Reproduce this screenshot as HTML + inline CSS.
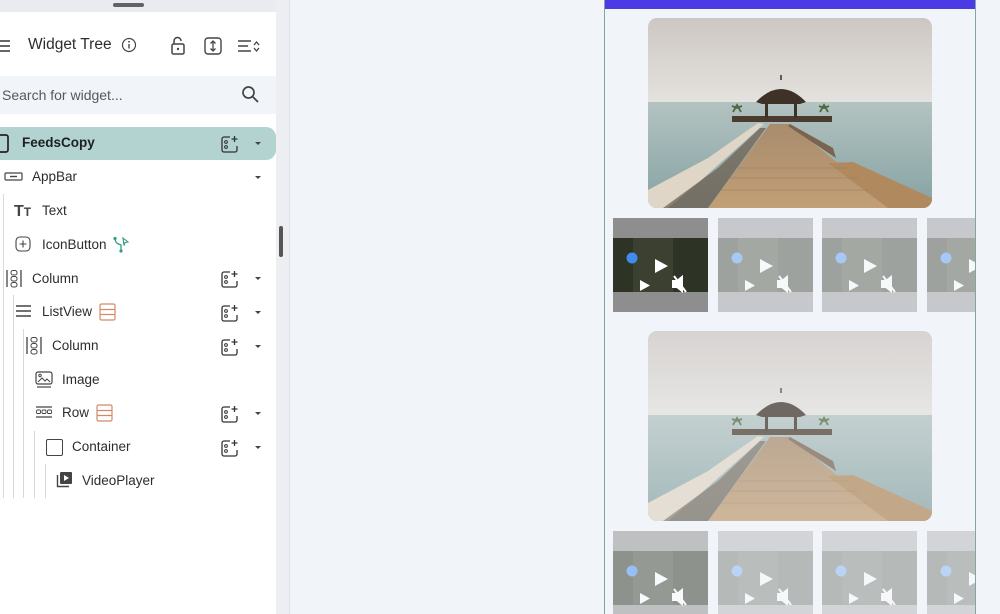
<!DOCTYPE html>
<html><head><meta charset="utf-8"><style>
*{margin:0;padding:0;box-sizing:border-box}
body{width:1000px;height:614px;overflow:hidden;background:#f1f4f8;font-family:"Liberation Sans",sans-serif;position:relative;color:#14181b}
.a{position:absolute}
.lbl{position:absolute;font-size:13.5px;color:#2a2d30}
.tl{position:absolute;width:1px;background:#d7dadd}
.add{position:absolute;width:18px;height:18px}
.car{position:absolute;width:0;height:0;border-left:3px solid transparent;border-right:3px solid transparent;border-top:3.5px solid #444}
</style></head><body>
<div class="a" style="left:0;top:0;width:276px;height:12px;background:#e9ebee"></div>
<div class="a" style="left:113px;top:3px;width:31px;height:4px;border-radius:2px;background:#5f6368"></div>
<div class="a" style="left:0;top:12px;width:276px;height:602px;background:#fff"></div>
<div class="a" style="left:276px;top:0;width:13px;height:614px;background:#eceef1"></div>
<div class="a" style="left:289px;top:0;width:1px;height:614px;background:#e0e3e7"></div>
<div class="a" style="left:279px;top:226px;width:4px;height:31px;border-radius:2px;background:#555"></div>

<svg class="a" style="left:0;top:38px" width="12" height="16"><path d="M0 3h10M0 8h10M0 13h10" stroke="#333" stroke-width="1.6"/></svg>
<div class="a" style="left:28px;top:36px;font-size:15.5px;color:#2a2d30">Widget Tree</div>
<svg class="a" style="left:121px;top:37px" width="16" height="16"><circle cx="8" cy="8" r="6.5" fill="none" stroke="#444" stroke-width="1.2"/><path d="M8 7v4.5" stroke="#444" stroke-width="1.4"/><circle cx="8" cy="4.8" r=".9" fill="#444"/></svg>
<svg class="a" style="left:169px;top:36px" width="18" height="20"><path d="M5 8V5a3.5 3.5 0 0 1 7 0" fill="none" stroke="#444" stroke-width="1.5"/><rect x="3" y="8" width="12" height="10" rx="1.5" fill="none" stroke="#444" stroke-width="1.5"/><circle cx="9" cy="13" r="1.2" fill="#444"/></svg>
<svg class="a" style="left:203px;top:36px" width="20" height="20"><rect x="2" y="2" width="16" height="16" rx="3" fill="none" stroke="#444" stroke-width="1.4"/><path d="M10 5v10M7.5 7.5 10 5l2.5 2.5M7.5 12.5 10 15l2.5-2.5" fill="none" stroke="#444" stroke-width="1.3"/></svg>
<svg class="a" style="left:237px;top:39px" width="24" height="16"><path d="M1 2h13M1 7h10M1 12h13" stroke="#444" stroke-width="1.6"/><path d="M17 6l2.5-3 2.5 3M17 9l2.5 3 2.5-3" fill="none" stroke="#444" stroke-width="1.3"/></svg>

<div class="a" style="left:0;top:76px;width:276px;height:38px;background:#f1f4f8"></div>
<div class="a" style="left:2px;top:87px;font-size:14px;color:#55595d">Search for widget...</div>
<svg class="a" style="left:241px;top:85px" width="20" height="20"><circle cx="7.5" cy="7.5" r="5.5" fill="none" stroke="#444" stroke-width="1.7"/><path d="M11.5 11.5 17 17" stroke="#444" stroke-width="1.8"/></svg>

<div class="a" style="left:0;top:127px;width:276px;height:33px;background:#b2d3cf;border-radius:0 10px 10px 0"></div>
<svg class="a" style="left:0;top:134px" width="10" height="20"><rect x="-4" y="1" width="12" height="17" rx="2" fill="none" stroke="#222" stroke-width="1.7"/></svg>
<div class="lbl" style="left:22px;top:135px;font-weight:bold;color:#1d2022">FeedsCopy</div>

<div class="tl" style="left:3px;top:194px;height:304px"></div>
<div class="tl" style="left:13px;top:295px;height:203px"></div>
<div class="tl" style="left:23px;top:329px;height:169px"></div>
<div class="tl" style="left:34px;top:431px;height:67px"></div>
<div class="tl" style="left:45px;top:464px;height:34px"></div>

<svg class="a" style="left:4px;top:172px" width="20" height="10"><rect x="1" y="1" width="17" height="7" rx="1" fill="none" stroke="#444" stroke-width="1.2"/><path d="M6 4.5h7" stroke="#444" stroke-width="1.4"/></svg>
<div class="lbl" style="left:32px;top:169px">AppBar</div>

<div class="a" style="left:14px;top:203px;font-size:16px;font-weight:bold;color:#444">T<span style="font-size:12px">T</span></div>
<div class="lbl" style="left:42px;top:203px">Text</div>

<svg class="a" style="left:15px;top:236px" width="16" height="16"><rect x="1" y="1" width="14" height="14" rx="4" fill="none" stroke="#444" stroke-width="1.1"/><path d="M8 4.5v7M4.5 8h7" stroke="#444" stroke-width="1.1"/></svg>
<div class="lbl" style="left:42px;top:237px">IconButton</div>
<svg class="a" style="left:112px;top:236px" width="18" height="18"><path d="M3 2c0 5 3 6 6 7v6" fill="none" stroke="#2f9e83" stroke-width="1.3"/><circle cx="3" cy="2.5" r="1.6" fill="#2f9e83"/><circle cx="9" cy="15" r="1.6" fill="#2f9e83"/><path d="M11 2l5 4-3 .6-1 3z" fill="none" stroke="#2f9e83" stroke-width="1.1"/></svg>

<svg class="a" style="left:6px;top:269px" width="16" height="20"><path d="M1 1v17M15 1v17" stroke="#444" stroke-width="1.3"/><rect x="5" y="1.5" width="6" height="4.5" rx="2" fill="none" stroke="#444"/><rect x="5" y="7.5" width="6" height="4.5" rx="2" fill="none" stroke="#444"/><rect x="5" y="13.5" width="6" height="4.5" rx="2" fill="none" stroke="#444"/></svg>
<div class="lbl" style="left:32px;top:271px">Column</div>

<svg class="a" style="left:15px;top:305px" width="18" height="12"><path d="M1 1h15M1 6h15M1 11h15" stroke="#444" stroke-width="1.4"/></svg>
<div class="lbl" style="left:42px;top:304px">ListView</div>
<svg class="a" style="left:99px;top:303px" width="17" height="18"><rect x="1" y="1" width="15" height="16" rx="1.5" fill="none" stroke="#d4896a" stroke-width="1.2"/><path d="M1 6.5h15M1 11.5h15" stroke="#d4896a" stroke-width="1.2"/></svg>

<svg class="a" style="left:26px;top:336px" width="16" height="20"><path d="M1 1v17M15 1v17" stroke="#444" stroke-width="1.3"/><rect x="5" y="1.5" width="6" height="4.5" rx="2" fill="none" stroke="#444"/><rect x="5" y="7.5" width="6" height="4.5" rx="2" fill="none" stroke="#444"/><rect x="5" y="13.5" width="6" height="4.5" rx="2" fill="none" stroke="#444"/></svg>
<div class="lbl" style="left:52px;top:338px">Column</div>

<svg class="a" style="left:35px;top:371px" width="18" height="18"><rect x="1" y="1" width="16" height="12" rx="2" fill="none" stroke="#444" stroke-width="1.2"/><path d="M3 11l4-4 3 3 2-2 3 3" fill="none" stroke="#444"/><circle cx="5" cy="4.5" r="1.2" fill="none" stroke="#444"/><path d="M2 16h14" stroke="#444" stroke-width="1.2"/></svg>
<div class="lbl" style="left:62px;top:372px">Image</div>

<svg class="a" style="left:35px;top:406px" width="18" height="14"><path d="M1 1h16M1 11h16" stroke="#444" stroke-width="1.2"/><rect x="1.5" y="4" width="4" height="3.5" rx="1" fill="none" stroke="#444" stroke-width=".9"/><rect x="7" y="4" width="4" height="3.5" rx="1" fill="none" stroke="#444" stroke-width=".9"/><rect x="12.5" y="4" width="4" height="3.5" rx="1" fill="none" stroke="#444" stroke-width=".9"/></svg>
<div class="lbl" style="left:62px;top:405px">Row</div>
<svg class="a" style="left:96px;top:404px" width="17" height="18"><rect x="1" y="1" width="15" height="16" rx="1.5" fill="none" stroke="#d4896a" stroke-width="1.2"/><path d="M1 6.5h15M1 11.5h15" stroke="#d4896a" stroke-width="1.2"/></svg>

<div class="a" style="left:46px;top:439px;width:17px;height:17px;border:1.3px solid #444;border-radius:2px"></div>
<div class="lbl" style="left:72px;top:439px">Container</div>

<svg class="a" style="left:56px;top:471px" width="18" height="18"><rect x="4" y="1" width="12" height="12" rx="1" fill="#444"/><path d="M8 4v6l5-3z" fill="#fff"/><path d="M1.5 4v11.5H13" fill="none" stroke="#444" stroke-width="1.4"/></svg>
<div class="lbl" style="left:82px;top:473px">VideoPlayer</div>

<svg width="0" height="0" style="position:absolute"><defs><g id="ad"><path d="M9 2H3a2 2 0 0 0-2 2v11a2 2 0 0 0 2 2h11a2 2 0 0 0 2-2v-4" fill="none" stroke="#333" stroke-width="1.3"/><circle cx="5" cy="7" r="1.4" fill="none" stroke="#333" stroke-width="1"/><circle cx="5" cy="12" r="1.4" fill="none" stroke="#333" stroke-width="1"/><path d="M13.5 1v6M10.5 4h6" stroke="#333" stroke-width="1.3"/></g></defs></svg>
<svg class="add" style="left:221px;top:135px"><use href="#ad"/></svg>
<svg class="add" style="left:221px;top:270px"><use href="#ad"/></svg>
<svg class="add" style="left:221px;top:304px"><use href="#ad"/></svg>
<svg class="add" style="left:221px;top:338px"><use href="#ad"/></svg>
<svg class="add" style="left:221px;top:405px"><use href="#ad"/></svg>
<svg class="add" style="left:221px;top:439px"><use href="#ad"/></svg>
<div class="car" style="left:255px;top:142px"></div>
<div class="car" style="left:255px;top:176px"></div>
<div class="car" style="left:255px;top:277px"></div>
<div class="car" style="left:255px;top:311px"></div>
<div class="car" style="left:255px;top:345px"></div>
<div class="car" style="left:255px;top:412px"></div>
<div class="car" style="left:255px;top:446px"></div>

<div class="a" style="left:604px;top:0;width:372px;height:614px;border-left:1.5px solid #7fa7a0;border-right:1.5px solid #7fa7a0;background:#f1f4f8"></div>
<div class="a" style="left:605px;top:0;width:370px;height:9px;background:#4b3ae6"></div>

<svg width="0" height="0" style="position:absolute"><defs>
<linearGradient id="sky" x1="0" y1="0" x2="0" y2="1"><stop offset="0" stop-color="#cdc7c3"/><stop offset="1" stop-color="#e4e2de"/></linearGradient>
<linearGradient id="sea" x1="0" y1="0" x2="0" y2="1"><stop offset="0" stop-color="#b3c3c1"/><stop offset="1" stop-color="#86a2a3"/></linearGradient>
<linearGradient id="wood" x1="0" y1="0" x2="0" y2="1"><stop offset="0" stop-color="#a88c6e"/><stop offset="1" stop-color="#c29f76"/></linearGradient>
<clipPath id="rc"><rect width="284" height="190" rx="9"/></clipPath>
<g id="pic"><g clip-path="url(#rc)">
<rect width="284" height="84" fill="url(#sky)"/>
<rect y="84" width="284" height="106" fill="url(#sea)"/>
<path d="M0 172 L60 140 L110 105 L116 106 L50 165 L20 190 L0 190z" fill="#e0d6c8"/>
<path d="M15 190 L70 150 L112 110 L118 110 L60 190z" fill="#6b5a4a" opacity=".7"/>
<path d="M60 190 L122 106 L142 106 L245 190z" fill="url(#wood)"/>
<path d="M180 145 L205 144 L284 180 L284 190 L240 190z" fill="#b08a5e"/>
<path d="M142 106 L185 130 L188 140 L140 108z" fill="#7a6450"/>
<rect x="84" y="98" width="100" height="6" fill="#4a3c30"/>
<path d="M108 84 Q133 58 158 84 L152 86 L114 86z" fill="#3e3128"/>
<path d="M133 62 v-5" stroke="#3e3128" stroke-width="1.5"/>
<rect x="117" y="86" width="3" height="14" fill="#3e3128"/><rect x="146" y="86" width="3" height="14" fill="#3e3128"/>
<path d="M85 94l4-7 4 7M84 88l5 2 5-2M172 94l4-7 4 7M171 88l5 2 5-2" stroke="#4f6a40" stroke-width="1.8" fill="none"/>
<path d="M90 150h110M80 160h130M70 172h150" stroke="#8c7154" stroke-width=".8" opacity=".5"/>
</g></g>
<g id="vid">
<rect width="95" height="94" fill="#8e8e8e"/>
<rect y="20" width="95" height="54" fill="#2d3325"/>
<rect x="20" y="20" width="40" height="54" fill="#454a38" opacity=".6"/>
<circle cx="19" cy="40" r="5.5" fill="#3f8cf0"/>
<path d="M42 41v14l13-7z" fill="#fff"/>
<path d="M27 62v11l10-5.5z" fill="#fff"/>
<path d="M60 63h4l5-4v14l-5-4h-4z M61 58l12 16" stroke="#fff" stroke-width="2" fill="#fff"/>
</g>
</defs></svg>

<svg class="a" style="left:648px;top:18px" width="284" height="190"><use href="#pic"/></svg>
<svg class="a" style="left:648px;top:331px;opacity:.72" width="284" height="190"><use href="#pic"/></svg>

<svg class="a" style="left:613px;top:218px" width="362" height="95">
<use href="#vid"/>
<g opacity=".42"><use href="#vid" x="105"/><use href="#vid" x="209"/><use href="#vid" x="314"/></g>
</svg>
<svg class="a" style="left:613px;top:531px" width="362" height="83">
<g opacity=".5"><use href="#vid"/></g>
<g opacity=".3"><use href="#vid" x="105"/><use href="#vid" x="209"/><use href="#vid" x="314"/></g>
</svg>
</body></html>
